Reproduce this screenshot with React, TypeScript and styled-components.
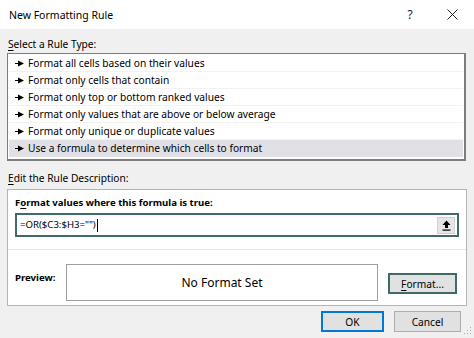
import React from 'react'
import styled, { createGlobalStyle } from 'styled-components'

const GlobalStyle = createGlobalStyle`
	html, body {
		margin: 0;
		padding: 0;
		background: #f0f0f0;
	}
	body {
		font-family: 'Noto Sans', 'Open Sans', sans-serif;
		font-size: 10.2px;
		color: #000;
	}
`

const RULE_TYPES = [
	'Format all cells based on their values',
	'Format only cells that contain',
	'Format only top or bottom ranked values',
	'Format only values that are above or below average',
	'Format only unique or duplicate values',
	'Use a formula to determine which cells to format',
]

const Window = styled.div`
	position: relative;
	width: 474px;
	height: 338px;
	display: flex;
	flex-direction: column;
	background: #f0f0f0;
	overflow: hidden;
`

const TitleBar = styled.div`
	height: 29px;
	background: #fff;
	display: flex;
	align-items: center;
	padding-left: 9px;
	font-size: 10.5px;
`

const Title = styled.span`
	flex: 1;
`

const TitleButton = styled.span<{ $w: number }>`
	width: ${({ $w }) => $w}px;
	display: flex;
	justify-content: center;
	font-size: 12px;
	color: #222;
`

const Body = styled.div`
	flex: 1;
	display: flex;
	flex-direction: column;
	padding: 7px 7px 0 7px;
`

const SectionLabel = styled.div<{ $gap?: number }>`
	height: 17px;
	line-height: 17px;
	padding-left: 1px;
	margin-top: ${({ $gap }) => $gap ?? 0}px;
`

const Key = styled.span`
	text-decoration: underline;
	text-underline-offset: 2px;
`

const RuleList = styled.div`
	height: 103px;
	margin-right: 1px;
	border: 2px solid #7d7d7d;
	border-left-width: 1px;
	border-top-width: 1px;
	background: #fff;
	padding: 1px;
	display: flex;
	flex-direction: column;
`

const RuleRow = styled.div<{ $selected?: boolean }>`
	height: 17px;
	display: flex;
	align-items: center;
	gap: 4px;
	padding-left: 6px;
	border-bottom: 1px solid ${({ $selected }) => ($selected ? 'transparent' : '#f2f2f2')};
	background: ${({ $selected }) => ($selected ? '#e0e0e6' : '#fff')};
	box-sizing: border-box;
	white-space: nowrap;
`

const Panel = styled.div`
	margin-top: 2px;
	height: 115px;
	border: 1px solid #b4b4b4;
	background: #fff;
	display: flex;
	flex-direction: column;
`

const PanelTop = styled.div`
	padding: 4px 7px 0 7px;
	height: 55px;
	border-bottom: 1px solid #e6e6e6;
`

const BoldLabel = styled.div<{ $w?: number }>`
	font-weight: 700;
	font-size: 9.6px;
	height: 17px;
	line-height: 17px;
	white-space: nowrap;
	${({ $w }) => ($w ? `width: ${$w}px; flex: none; margin-top: 5px;` : '')}
`

const FormulaBox = styled.div`
	margin-top: 2px;
	height: 24px;
	box-sizing: border-box;
	border: 2px solid #3e6a6c;
	display: flex;
	align-items: center;
	padding-left: 3px;
	padding-right: 2px;
`

const FormulaText = styled.span`
	flex: 1;
	font-size: 9.6px;
`

const Caret = styled.span`
	display: inline-block;
	width: 1px;
	height: 13px;
	background: #000;
	vertical-align: middle;
	margin-left: 1px;
`

const CollapseButton = styled.div`
	width: 18px;
	height: 17px;
	background: #e5e5e5;
	border: 1px solid #d2d2d2;
	box-sizing: border-box;
	display: flex;
	align-items: center;
	justify-content: center;
`

const PreviewRow = styled.div`
	flex: 1;
	display: flex;
	align-items: flex-start;
	padding: 14px 9px 0 7px;
`

const PreviewBox = styled.div`
	width: 312px;
	height: 37px;
	border: 1px solid #a0a0a0;
	box-sizing: border-box;
	display: flex;
	align-items: center;
	justify-content: center;
	font-size: 12px;
	margin-right: 10px;
`

const DialogButton = styled.button<{ $w: number; $border?: string; $bw?: number }>`
	width: ${({ $w }) => $w}px;
	height: 21px;
	padding: 0;
	box-sizing: border-box;
	background: #e1e1e1;
	border: ${({ $bw }) => $bw ?? 1}px solid ${({ $border }) => $border ?? '#adadad'};
	font-family: inherit;
	font-size: 10.2px;
	color: #000;
`

const FormatButton = styled(DialogButton)`
	margin-top: 9px;
`

const FooterRow = styled.div`
	display: flex;
	justify-content: flex-end;
	gap: 10px;
	padding-right: 6px;
	margin-top: 5px;
`

const Grip = styled.svg`
	position: absolute;
	right: 2px;
	bottom: 3px;
`

const Pointer = () => (
	<svg width="9" height="7" viewBox="0 0 9 7">
		<rect x="0" y="3" width="4" height="1" fill="#000" />
		<polygon points="3,0.5 9,3.5 3,6.5" fill="#000" />
	</svg>
)

export default function App() {
	return (
		<>
			<GlobalStyle />
			<Window>
				<TitleBar>
					<Title>New Formatting Rule</Title>
					<TitleButton $w={40}>?</TitleButton>
					<TitleButton $w={44}>
						<svg width="11" height="11" viewBox="0 0 11 11">
							<path d="M0.5 0.5 L10.5 10.5 M10.5 0.5 L0.5 10.5" stroke="#222" strokeWidth="1" />
						</svg>
					</TitleButton>
				</TitleBar>
				<Body>
					<SectionLabel>
						<Key>S</Key>elect a Rule Type:
					</SectionLabel>
					<RuleList>
						{RULE_TYPES.map((r, i) => (
							<RuleRow key={r} $selected={i === RULE_TYPES.length - 1}>
								<Pointer />
								<span>{r}</span>
							</RuleRow>
						))}
					</RuleList>
					<SectionLabel $gap={9}>
						<Key>E</Key>dit the Rule Description:
					</SectionLabel>
					<Panel>
						<PanelTop>
							<BoldLabel>
								F<Key>o</Key>rmat values where this formula is true:
							</BoldLabel>
							<FormulaBox>
								<FormulaText>
									=OR($C3:$H3=&quot;&quot;)
									<Caret />
								</FormulaText>
								<CollapseButton>
									<svg width="9" height="11" viewBox="0 0 9 11">
										<polygon points="4.5,0.5 8.5,5 6,5 6,8 3,8 3,5 0.5,5" fill="#000" />
										<rect x="0.5" y="9.5" width="8" height="1.2" fill="#000" />
									</svg>
								</CollapseButton>
							</FormulaBox>
						</PanelTop>
						<PreviewRow>
							<BoldLabel $w={51}>Preview:</BoldLabel>
							<PreviewBox>No Format Set</PreviewBox>
							<FormatButton $w={69} $border="#3e6a6c" $bw={2}>
								<Key>F</Key>ormat...
							</FormatButton>
						</PreviewRow>
					</Panel>
					<FooterRow>
						<DialogButton $w={63} $border="#0078d7" $bw={2}>
							OK
						</DialogButton>
						<DialogButton $w={67}>Cancel</DialogButton>
					</FooterRow>
				</Body>
				<Grip width="8" height="8" viewBox="0 0 8 8">
					<rect x="6" y="6" width="1" height="1" fill="#aaa" />
					<rect x="3" y="6" width="1" height="1" fill="#aaa" />
					<rect x="6" y="3" width="1" height="1" fill="#aaa" />
					<rect x="0" y="6" width="1" height="1" fill="#aaa" />
					<rect x="3" y="3" width="1" height="1" fill="#aaa" />
					<rect x="6" y="0" width="1" height="1" fill="#aaa" />
				</Grip>
			</Window>
		</>
	)
}
